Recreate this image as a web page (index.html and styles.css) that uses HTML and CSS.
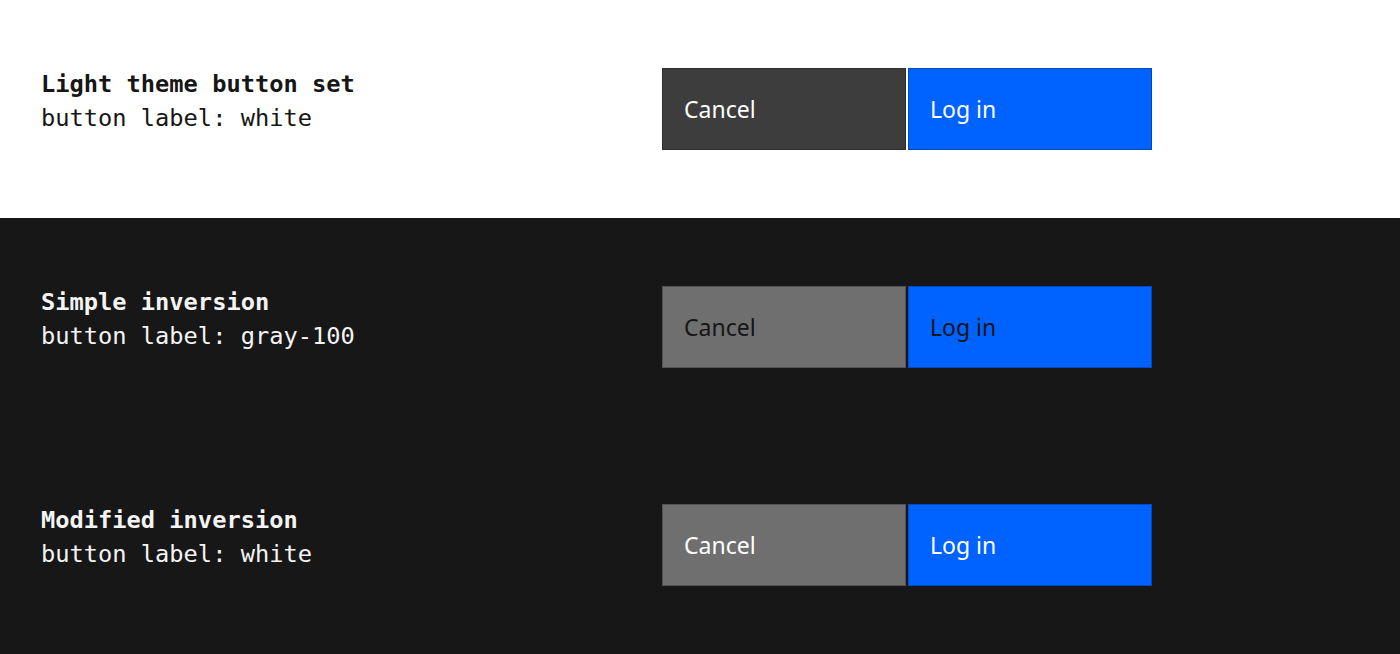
FILE: index.html
```html
<!DOCTYPE html>
<html lang="en">
<head>
<meta charset="utf-8">
<title>Button sets</title>
<link rel="stylesheet" href="styles.css">
</head>
<body>
  <section class="row row-light">
    <div class="desc">
      <div class="desc-title">Light theme button set</div>
      <div class="desc-sub">button label: white</div>
    </div>
    <div class="btn-set">
      <div class="btn btn-secondary-light">Cancel</div>
      <div class="btn btn-primary">Log in</div>
    </div>
  </section>
  <section class="row row-dark">
    <div class="desc">
      <div class="desc-title">Simple inversion</div>
      <div class="desc-sub">button label: gray-100</div>
    </div>
    <div class="btn-set">
      <div class="btn btn-secondary-dark label-dark">Cancel</div>
      <div class="btn btn-primary label-dark">Log in</div>
    </div>
  </section>
  <section class="row row-dark">
    <div class="desc">
      <div class="desc-title">Modified inversion</div>
      <div class="desc-sub">button label: white</div>
    </div>
    <div class="btn-set">
      <div class="btn btn-secondary-dark">Cancel</div>
      <div class="btn btn-primary">Log in</div>
    </div>
  </section>
</body>
</html>
```
FILE: styles.css
```css
html, body {
  margin: 0;
  padding: 0;
}
body {
  width: 1400px;
  height: 654px;
  overflow: hidden;
  background: #171717;
}
.row {
  height: 218px;
  display: flex;
  align-items: center;
  padding-left: 41px;
  box-sizing: border-box;
}
.row-light {
  background: #ffffff;
  color: #161616;
}
.row-dark {
  background: #171717;
  color: #f4f4f4;
}
.desc {
  width: 621px;
  font-family: "DejaVu Sans Mono", "Liberation Mono", monospace;
  font-size: 23.7px;
  line-height: 34px;
  margin-bottom: 16px;
}
.desc-title {
  font-weight: bold;
}
.btn-set {
  display: flex;
  gap: 2px;
}
.btn {
  width: 244px;
  height: 82px;
  box-sizing: border-box;
  padding-left: 21px;
  display: flex;
  align-items: center;
  font-family: "Noto Sans", "Open Sans", sans-serif;
  font-size: 23px;
  color: #ffffff;
  border: 1px solid rgba(0, 0, 0, 0.25);
}
.btn-secondary-light {
  background: #3d3d3d;
}
.btn-secondary-dark {
  background: #6f6f6f;
}
.btn-primary {
  background: #0062ff;
}
.label-dark {
  color: #161616;
}
```
